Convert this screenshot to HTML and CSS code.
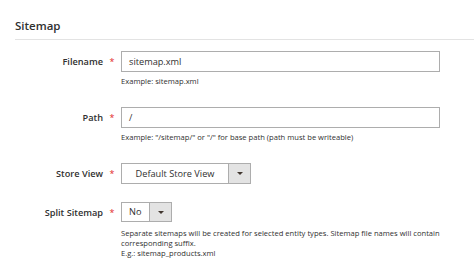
FILE: index.html
```html
<!DOCTYPE html>
<html>
<head>
<meta charset="utf-8">
<link rel="stylesheet" href="styles.css">
</head>
<body>
<section class="fieldset">
  <h2 class="title">Sitemap</h2>
  <div class="field">
    <div class="label">Filename</div>
    <div class="req">*</div>
    <div class="control">
      <div class="input">sitemap.xml</div>
      <div class="note">Example: sitemap.xml</div>
    </div>
  </div>
  <div class="field">
    <div class="label">Path</div>
    <div class="req">*</div>
    <div class="control">
      <div class="input">/</div>
      <div class="note">Example: "/sitemap/" or "/" for base path (path must be writeable)</div>
    </div>
  </div>
  <div class="field field-store">
    <div class="label">Store View</div>
    <div class="req">*</div>
    <div class="control">
      <div class="select select-store">
        <span class="select-value">Default Store View</span>
        <span class="select-btn"><span class="arrow"></span></span>
      </div>
    </div>
  </div>
  <div class="field">
    <div class="label">Split Sitemap</div>
    <div class="req">*</div>
    <div class="control">
      <div class="select select-split">
        <span class="select-value">No</span>
        <span class="select-btn"><span class="arrow"></span></span>
      </div>
      <div class="note note-long">Separate sitemaps will be created for selected entity types. Sitemap file names will contain corresponding suffix.<br>E.g.: sitemap_products.xml</div>
    </div>
  </div>
</section>
</body>
</html>
```
FILE: styles.css
```css
html, body {
  margin: 0;
  padding: 0;
  background: #ffffff;
}
body {
  font-family: "Open Sans", "Noto Sans", sans-serif;
  color: #303030;
}
.fieldset {
  padding: 18px 0 0 15px;
}
.title {
  margin: 0;
  font-size: 11.5px;
  font-weight: 600;
  line-height: 16px;
  color: #303030;
  padding-bottom: 5px;
  border-bottom: 1px solid #e3e3e3;
}
.field {
  display: flex;
  align-items: flex-start;
  margin-top: 11px;
}
.field + .field {
  margin-top: 21px;
}
.field-store + .field {
  margin-top: 18px;
}
.label {
  width: 88px;
  text-align: right;
  font-size: 9.2px;
  font-weight: 600;
  line-height: 21px;
}
.req {
  width: 18px;
  text-align: center;
  color: #e22626;
  font-size: 9px;
  line-height: 21px;
}
.control {
  width: 319px;
}
.input {
  box-sizing: border-box;
  height: 21px;
  border: 1px solid #adadad;
  background: #fff;
  font-size: 9.2px;
  line-height: 19px;
  padding-left: 7px;
}
.note {
  font-size: 7.6px;
  line-height: 10px;
  margin-top: 4px;
  color: #303030;
}
.select {
  box-sizing: border-box;
  display: flex;
  height: 21px;
  border: 1px solid #adadad;
  background: #fff;
}
.select-store {
  width: 130px;
}
.select-split {
  width: 51px;
  height: 20px;
}
.select-value {
  flex: 1;
  font-size: 9.2px;
  line-height: 19px;
}
.select-store .select-value {
  text-align: center;
}
.select-split .select-value {
  padding-left: 7px;
  line-height: 18px;
}
.select-btn {
  width: 21px;
  background: #e3e3e3;
  border-left: 1px solid #adadad;
  display: flex;
  align-items: center;
  justify-content: center;
}
.arrow {
  width: 0;
  height: 0;
  border-left: 3px solid transparent;
  border-right: 3px solid transparent;
  border-top: 3px solid #41362f;
}
.note-long {
  margin-top: 6px;
}
```
